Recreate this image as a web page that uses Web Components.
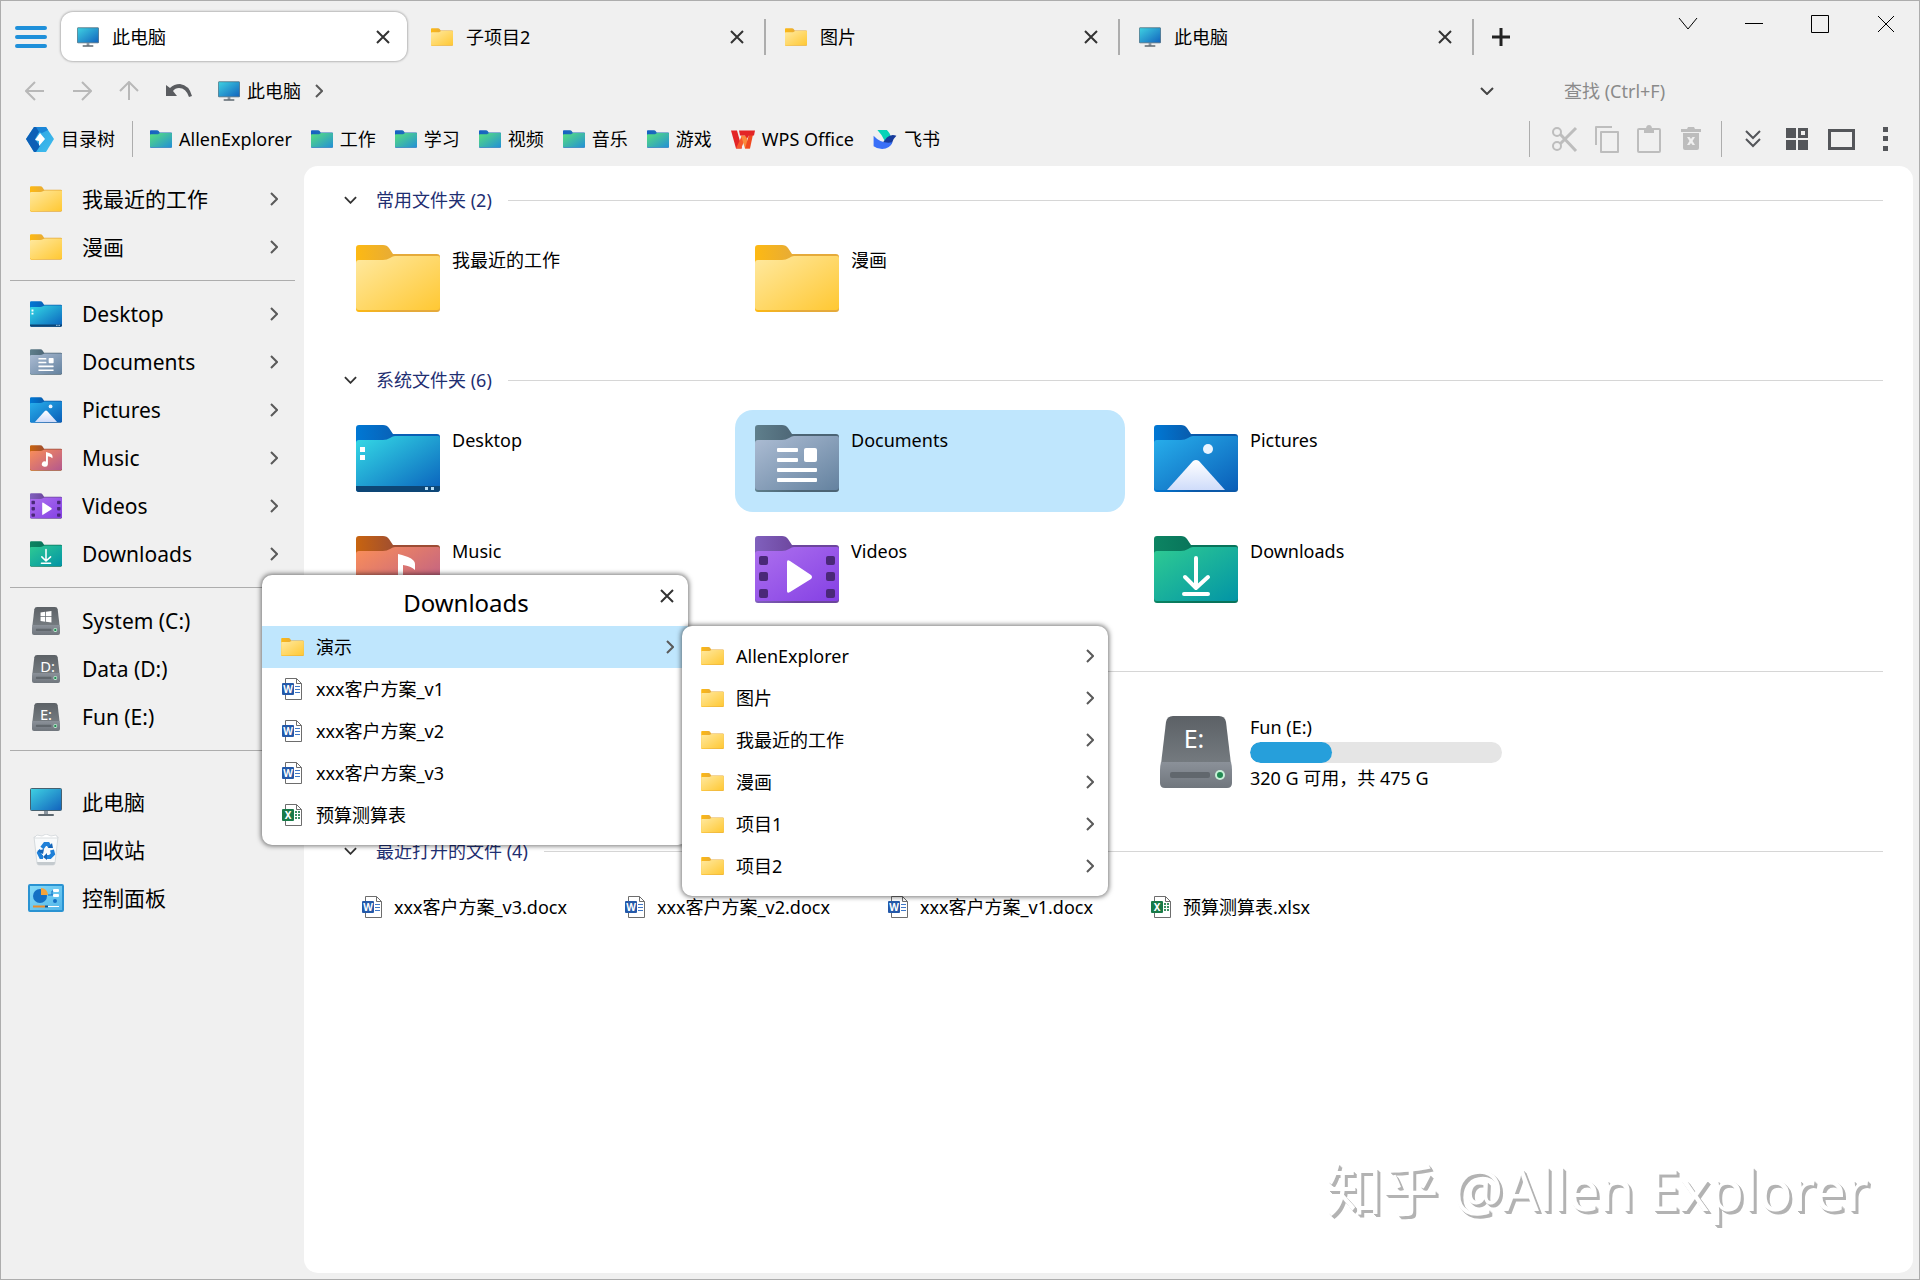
<!DOCTYPE html>
<html lang="zh-CN">
<head>
<meta charset="utf-8">
<title>Allen Explorer</title>
<style>
    html, body {
        margin: 0;
        padding: 0;
    }

    body {
        font-family: "Noto Sans", "Noto Sans CJK SC", sans-serif;
        font-size: 18px;
        line-height: 24px;
        color: #000;
        background: #f0f0f0;
    }
</style>
</head>
<body>
<explorer-window></explorer-window>

<script>
    // ---------- icons ----------
    // every folder shares one silhouette, only the colours and the emblem change
    function folder(tab1, tab2, front1, front2, emblem = '') {
        return `<svg viewBox="0 0 84 67">
            <defs>
                <linearGradient id="b" x1="0" y1="0" x2="1" y2="0"><stop offset="0" stop-color="${tab1}"/><stop offset=".5" stop-color="${tab2}"/></linearGradient>
                <linearGradient id="f" x1="0" y1="0" x2="1" y2="1"><stop offset="0" stop-color="${front1}"/><stop offset="1" stop-color="${front2}"/></linearGradient>
            </defs>
            <path fill="url(#b)" d="M3 0H27Q31 0 33 3L37 9H81Q84 9 84 12V64Q84 67 81 67H3Q0 67 0 64V3Q0 0 3 0Z"/>
            <path fill="url(#f)" d="M3 15H27Q31 15 34 13T39 11H82Q84 11 84 13V62Q84 65 81 65H3Q0 65 0 62V18Q0 15 3 15Z"/>
            ${emblem}
        </svg>`;
    }

    function drive(mark) {
        return `<svg viewBox="0 0 72 72">
            <defs>
                <linearGradient id="t" x1="0" y1="0" x2="0" y2="1"><stop offset="0" stop-color="#5c6166"/><stop offset="1" stop-color="#757b80"/></linearGradient>
                <linearGradient id="u" x1="0" y1="0" x2="0" y2="1"><stop offset="0" stop-color="#8b9199"/><stop offset="1" stop-color="#70767d"/></linearGradient>
            </defs>
            <path fill="url(#t)" d="M13 0H59Q65 0 66 6L71 48H1L6 6Q7 0 13 0Z"/>
            <path fill="url(#u)" d="M1 46H71Q72 50 72 54V67Q72 72 67 72H5Q0 72 0 67V54Q0 50 1 46Z"/>
            <rect x="10" y="56" width="40" height="6" rx="2" fill="#61676d"/>
            <circle cx="60" cy="59" r="5" fill="#c8f0d8"/><circle cx="60" cy="59" r="3" fill="#218a52"/>
            ${mark}
        </svg>`;
    }

    function driveLetter(text, size, x, y) {
        return `<text x="${x}" y="${y}" text-anchor="middle" font-size="${size}" fill="#fff">${text}</text>`;
    }

    function office(color, letter, lines) {
        return `<svg viewBox="0 0 20 22">
            <path fill="#fff" stroke="#6d6d6d" d="M3.500 .5H14.500L19.500 5.500V21.500H3.500Z"/>
            <path fill="none" stroke="#6d6d6d" d="M14.500 .5V5.500H19.500"/>
            ${lines}
            <rect x="0" y="5" width="12" height="12" rx="1" fill="${color}"/>
            <text x="6" y="14.500" text-anchor="middle" font-size="10" font-weight="700" fill="#fff">${letter}</text>
        </svg>`;
    }

    function line(box, d, width = 2, extra = '') {
        return `<svg viewBox="${box}"><path fill="none" stroke="currentColor" stroke-width="${width}" ${extra} d="${d}"/></svg>`;
    }

    const ICONS = {
        folder: folder('#fdb913', '#e5aa3a', '#ffe9a0', '#ffc833'),
        bookmark: folder('#1660c4', '#1d6fb8', '#58e07c', '#2390d6'),
        desktop: folder('#0078d4', '#0a5fb4', '#35dbe6', '#0a62bd',
            `<path fill="#0d4676" d="M0 61H84V64Q84 67 81 67H3Q0 67 0 64Z"/>
             <path fill="#fff" d="M4 22h5v5H4zM4 30h5v5H4z"/><path fill="#b5dcf5" d="M69 62h3v3h-3zM75 62h3v3h-3z"/>`),
        documents: folder('#5f7f8c', '#4c6474', '#adbdd4', '#64829f',
            `<g fill="#fff"><rect x="22" y="23" width="21" height="4" rx="1"/><rect x="22" y="33" width="21" height="4" rx="1"/>
             <rect x="49" y="23" width="13" height="14" rx="2"/><rect x="22" y="43" width="40" height="4" rx="1"/><rect x="22" y="53" width="40" height="4" rx="1"/></g>`),
        pictures: folder('#0078d4', '#0a58a8', '#28b0ec', '#0a5eb8',
            `<defs><linearGradient id="p" x1="0" y1="0" x2="0" y2="1"><stop offset="0" stop-color="#fff"/><stop offset="1" stop-color="#cfdcfa"/></linearGradient></defs>
             <path fill="url(#p)" d="M13 65L39 36Q42 34 45 36L71 65Z"/><circle cx="54" cy="24" r="5" fill="#eaf4ff"/>`),
        music: folder('#c8640f', '#9c4c34', '#fb8f58', '#b4588e',
            `<path fill="#fff" d="M42 18L46 19L52 21Q59 24 59 28V34Q55 30 47 29V50A8 7 0 1 1 42 43Z"/>`),
        videos: folder('#8060bd', '#6c459c', '#ad70ee', '#8440e4',
            `<path fill="#fff" d="M32 26Q32 23 35 25L56 39Q58 41 56 43L35 56Q32 58 32 55Z"/>
             <g fill="#4a2878"><rect x="4" y="20" width="9" height="9" rx="2"/><rect x="4" y="36" width="9" height="9" rx="2"/><rect x="4" y="53" width="9" height="9" rx="2"/>
             <rect x="71" y="20" width="9" height="9" rx="2"/><rect x="71" y="36" width="9" height="9" rx="2"/><rect x="71" y="53" width="9" height="9" rx="2"/></g>`),
        downloads: folder('#0c8462', '#08735a', '#2fcb92', '#0294a6',
            `<path fill="none" stroke="#fff" stroke-width="4" stroke-linecap="round" stroke-linejoin="round" d="M42 22V51M31 41L42 52L54 41M30 58H54"/>`),
        'drive-c': drive('<path fill="#fff" d="M22 14L34 12V24H22ZM36 12L50 10V24H36ZM22 26H34V38L22 36ZM36 26H50V40L36 38Z"/>'),
        'drive-d': drive(driveLetter('D:', 38, 40, 43)),
        'drive-e': drive(driveLetter('E:', 38, 36, 43)),
        'drive-e-large': drive(driveLetter('E:', 25, 34, 32)),
        word: office('#2459a9', 'W', '<path stroke="#3f78c8" d="M13 8.500H18M13 11.500H18M13 14.500H18"/>'),
        excel: office('#187a48', 'X', '<path stroke="#3c8f62" stroke-width="2" stroke-dasharray="2 1" d="M13 8H18M13 11H18M13 14H18"/>'),
        monitor: `<svg viewBox="0 0 32 28">
            <defs><linearGradient id="m" x1="0" y1="0" x2="1" y2="1"><stop offset="0" stop-color="#3fd2e2"/><stop offset="1" stop-color="#1262bd"/></linearGradient></defs>
            <path fill="#8c969f" d="M14 23h4v4h-4z"/><rect x="8" y="26" width="16" height="2" rx="1" fill="#5d6870"/>
            <rect x=".5" y=".5" width="31" height="22" rx="1" fill="url(#m)" stroke="#46606f"/></svg>`,
        recycle: `<svg viewBox="0 0 28 32">
            <path fill="#f8fafb" stroke="#d5dadd" d="M2 3L5 29Q5 31 7 31H21Q23 31 23 29L26 3Z"/>
            <path fill="#c4cace" d="M5 28H23Q23 31 21 31H7Q5 31 5 28Z"/>
            <path fill="#fff" stroke="#d9dde0" d="M2 4L5 1L10 2L14 0L19 2L24 1L26 4Z"/>
            <g fill="none" stroke="#1f80d8" stroke-width="4"><path d="M10 14L13 10H16L18 13"/><path d="M20 16L21 20L18 23H15"/><path d="M11 23H9L7 19L9 16"/></g>
            <path fill="#1565b8" d="M16 14L21 14L20 9ZM15 19V26L11 23ZM5 17L12 15L11 20Z"/></svg>`,
        control: `<svg viewBox="0 0 36 28">
            <defs><linearGradient id="c" x1="0" y1="0" x2="1" y2="1"><stop offset="0" stop-color="#86dcf9"/><stop offset="1" stop-color="#51b4e8"/></linearGradient></defs>
            <rect x="1" y="1" width="34" height="26" rx="1" fill="url(#c)" stroke="#2a93d2" stroke-width="2"/>
            <circle cx="12" cy="12" r="7" fill="#1470c4"/><path fill="#f5a33a" d="M13 11V4A7 7 0 0 1 20 11Z"/>
            <g fill="none" stroke="#1470c4"><path d="M20 11H24V7H26M24 11H26"/></g>
            <g fill="#fff"><rect x="25" y="5" width="6" height="3" rx="1"/><rect x="25" y="10" width="6" height="3" rx="1"/></g><circle cx="27" cy="17" r="2" fill="#1470c4"/>
            <path stroke="#e98b2a" stroke-width="2" d="M5 22.500H17"/><path stroke="#fff" d="M20 22.500H31"/><path stroke="#14548a" stroke-width="2" d="M17 22.500H20"/></svg>`,
        tree: `<svg viewBox="0 0 28 25">
            <defs><linearGradient id="r" x1="0" y1="0" x2="1" y2="1"><stop offset="0" stop-color="#2a9fe0"/><stop offset="1" stop-color="#3fbdee"/></linearGradient></defs>
            <path fill="url(#r)" d="M8 0H20L28 12L20 25H8L0 12Z"/>
            <path fill="#0d5fb6" d="M8 0L16 0L9 12L14 19L10 25H8L0 12Z"/>
            <path fill="#1a86d8" d="M10 0H20L22 3L16 6L13 5Z"/>
            <path fill="#fff" d="M14 6L19 12L13 19L13 14L9 13Z"/></svg>`,
        wps: `<svg viewBox="0 0 24 18"><path fill="#e32526" d="M0 0H6L11 18H5Z"/><path fill="#f7582d" d="M11 5L14 9L10 18H5Z"/>
            <path fill="#fa8a3b" d="M10 5H16V9L19 18H14Z"/><path fill="#f0481f" d="M18 4H22L19 18H14Z"/><path fill="#e32526" d="M8 0H24L23 5H18L16 8L14 5H9Z"/></svg>`,
        feishu: `<svg viewBox="0 0 24 20"><path fill="#05d3b8" d="M4 0H14Q18 4 18 8L12 12Q9 5 4 0Z"/>
            <path fill="#173b9c" d="M9 14L14 8Q18 4 24 6Q21 9 20 12Q18 18 12 18Z"/><path fill="#3a70f8" d="M0 6Q8 15 20 13Q17 20 9 20Q4 20 0 17Z"/></svg>`,
        menu: line('0 0 32 24', 'M2 3H30M2 12H30M2 21H30', 4, 'stroke-linecap="round"'),
        close: line('0 0 14 14', 'M1 1L13 13M13 1L1 13'),
        plus: line('0 0 20 20', 'M10 1V19M1 10H19', 3),
        back: line('0 0 20 20', 'M19 10H2M10 1L1 10L10 19'),
        forward: line('0 0 20 20', 'M1 10H18M10 1L19 10L10 19'),
        up: line('0 0 20 20', 'M10 19V2M1 10L10 1L19 10'),
        undo: `<svg viewBox="0 0 26 14"><path fill="currentColor" d="M0 1L4 4Q8 0 14 0Q23 1 26 12L23 13Q20 4 13 4Q9 4 7 7L11 12H0Z"/></svg>`,
        right: line('0 0 8 14', 'M1 1L7 7L1 13'),
        down: line('0 0 14 8', 'M1 1L7 7L13 1'),
        'win-down': line('0 0 20 20', 'M1 4L10 15L19 4', 1),
        'win-min': line('0 0 20 20', 'M1 9.500H19', 1),
        'win-max': line('0 0 20 20', 'M1.500 1.500H18.500V18.500H1.500Z', 1),
        'win-close': line('0 0 20 20', 'M2 2L18 18M18 2L2 18', 1),
        cut: `<svg viewBox="0 0 26 26"><g fill="none" stroke="currentColor" stroke-width="2"><circle cx="5" cy="6" r="4"/><circle cx="5" cy="20" r="4"/></g>
            <path stroke="currentColor" stroke-width="3" d="M8 8L24 25M8 18L24 2"/></svg>`,
        copy: line('0 0 26 28', 'M2 20V2H18M7 7H24V27H7Z', 2, 'stroke-linejoin="round"'),
        paste: `<svg viewBox="0 0 26 28"><rect x="2" y="4" width="22" height="23" rx="1" fill="none" stroke="currentColor" stroke-width="2"/>
            <path fill="currentColor" fill-rule="evenodd" d="M8 4H10Q10 0 13 0Q16 0 16 4H18V8H8ZM12 3V5H14V3Z"/></svg>`,
        trash: `<svg viewBox="0 0 20 24"><path fill="currentColor" d="M0 2H6L7 0H13L14 2H20V5H0Z"/><path fill="currentColor" fill-rule="evenodd" d="M2 6H18V21Q18 23 16 23H4Q2 23 2 21ZM6 10L8.500 14L6 18H8.500L10 16L11.500 18H14L11.500 14L14 10H11.500L10 12L8.500 10Z"/></svg>`,
        more: line('0 0 16 18', 'M1 1L8 8L15 1M1 9L8 16L15 9'),
        grid: `<svg viewBox="0 0 22 22"><path fill="currentColor" fill-rule="evenodd" d="M0 0H10V10H0ZM12 0H22V10H12ZM15 3V7H19V3ZM0 12H10V22H0ZM12 12H22V22H12Z"/></svg>`,
        pane: line('0 0 27 21', 'M1.500 1.500H25.500V19.500H1.500Z', 3),
        dots: `<svg viewBox="0 0 5 24"><path fill="currentColor" d="M0 0H5V5H0ZM0 9H5V14H0ZM0 19H5V24H0Z"/></svg>`
    };

    // button and link reset shared by the elements below
    const RESET = `
        button, a {
            font: inherit;
            color: inherit;
            background: none;
            border: 0;
            padding: 0;
            margin: 0;
            text-align: left;
            text-decoration: none;
            cursor: pointer;
            white-space: nowrap;
        }
    `;

    class ExplorerElement extends HTMLElement {
        connectedCallback() {
            if (!this.shadowRoot) {
                this.attachShadow({ mode: 'open' });
                this.shadowRoot.innerHTML = this.render();
            }
        }

        attr(name, fallback = '') {
            return this.getAttribute(name) || fallback;
        }
    }

    class ExplorerIcon extends ExplorerElement {
        render() {
            return `
                <style>
                    :host { display: block; flex: none; width: 20px; height: 20px; }
                    svg { display: block; width: 100%; height: 100%; }
                </style>
                ${ICONS[this.attr('name')]}
            `;
        }
    }
    customElements.define('explorer-icon', ExplorerIcon);

    class ExplorerTab extends ExplorerElement {
        render() {
            return `
                <style>
                    ${RESET}
                    :host {
                        display: flex;
                        align-items: center;
                        flex: 0 1 354px;
                        min-width: 0;
                    }
                    .tab {
                        display: flex;
                        align-items: center;
                        flex: 1;
                        min-width: 0;
                        height: 49px;
                        padding: 0 17px 0 16px;
                        box-sizing: border-box;
                        border-radius: 12px;
                    }
                    :host([active]) .tab {
                        background: #fff;
                        box-shadow: 0 0 2px 1px #b8b8b8;
                    }
                    .label { display: flex; align-items: center; gap: 13px; flex: 1; min-width: 0; }
                    .label explorer-icon { width: 22px; height: 18px; }
                    .label explorer-icon[name="monitor"] { height: 20px; }
                    .close explorer-icon { width: 14px; height: 14px; color: #333; }
                    .line { width: 2px; height: 36px; margin: 0 3px; background: #adadad; }
                    :host([active]) .line { background: none; }
                </style>
                <div class="tab">
                    <button class="label"><explorer-icon name="${this.attr('icon')}"></explorer-icon><slot></slot></button>
                    <button class="close" aria-label="关闭"><explorer-icon name="close"></explorer-icon></button>
                </div>
                <div class="line"></div>
            `;
        }
    }
    customElements.define('explorer-tab', ExplorerTab);

    class ExplorerBookmark extends ExplorerElement {
        render() {
            return `
                <style>
                    ${RESET}
                    :host { display: block; }
                    a { display: flex; align-items: center; gap: 7px; }
                    explorer-icon { width: 22px; height: 18px; }
                    :host([logo]) explorer-icon { width: 24px; height: 19px; }
                    :host([tree]) explorer-icon { width: 28px; height: 25px; }
                </style>
                <a href="#"><explorer-icon name="${this.attr('icon', 'bookmark')}"></explorer-icon><slot></slot></a>
            `;
        }
    }
    customElements.define('explorer-bookmark', ExplorerBookmark);

    class ExplorerSideItem extends ExplorerElement {
        render() {
            return `
                <style>
                    ${RESET}
                    :host { display: block; font-size: 21px; }
                    a { display: flex; align-items: center; height: 48px; padding: 0 26px 0 27px; }
                    .icon { display: flex; justify-content: center; width: 36px; margin-right: 18px; }
                    .icon explorer-icon { width: 32px; height: 28px; }
                    .icon explorer-icon[name^="drive"] { width: 28px; }
                    .icon explorer-icon[name="recycle"] { height: 32px; }
                    .icon explorer-icon[name="control"] { width: 36px; }
                    .text { flex: 1; }
                    .arrow { width: 8px; height: 14px; color: #5a5a5a; }
                    :host([leaf]) .arrow { display: none; }
                </style>
                <a href="#">
                    <span class="icon"><explorer-icon name="${this.attr('icon')}"></explorer-icon></span>
                    <span class="text"><slot></slot></span>
                    <explorer-icon class="arrow" name="right"></explorer-icon>
                </a>
            `;
        }
    }
    customElements.define('explorer-side-item', ExplorerSideItem);

    class ExplorerSection extends ExplorerElement {
        render() {
            return `
                <style>
                    ${RESET}
                    :host { display: block; margin-bottom: 24px; }
                    header { display: flex; align-items: center; height: 48px; margin-bottom: 6px; padding-left: 8px; }
                    button { display: flex; align-items: center; gap: 19px; color: #1f2f72; }
                    explorer-icon { width: 13px; height: 8px; color: #333; }
                    .line { flex: 1; height: 1px; margin-left: 16px; background: #d6d6d6; }
                    .items { display: grid; grid-template-columns: repeat(auto-fill, 390px); gap: 9px; }
                    :host([compact]) .items { grid-template-columns: repeat(auto-fill, 263px); gap: 0; }
                </style>
                <header>
                    <button aria-expanded="true" aria-label="${this.attr('label', '驱动器')}"><explorer-icon name="down"></explorer-icon><span>${this.attr('label')}</span></button>
                    <div class="line"></div>
                </header>
                <div class="items"><slot></slot></div>
            `;
        }
    }
    customElements.define('explorer-section', ExplorerSection);

    class ExplorerTile extends ExplorerElement {
        render() {
            return `
                <style>
                    ${RESET}
                    :host { display: block; }
                    a {
                        display: flex;
                        gap: 12px;
                        height: 102px;
                        padding: 15px 20px 0;
                        box-sizing: border-box;
                        border-radius: 18px;
                    }
                    :host([selected]) a { background: #bfe6fd; }
                    explorer-icon { width: 84px; height: 67px; }
                    .text { padding-top: 3px; }
                </style>
                <a href="#"><explorer-icon name="${this.attr('icon')}"></explorer-icon><span class="text"><slot></slot></span></a>
            `;
        }
    }
    customElements.define('explorer-tile', ExplorerTile);

    class ExplorerDrive extends ExplorerElement {
        render() {
            return `
                <style>
                    ${RESET}
                    :host { display: block; }
                    a {
                        display: flex;
                        gap: 18px;
                        height: 102px;
                        padding: 14px 26px 0;
                        box-sizing: border-box;
                    }
                    explorer-icon { width: 72px; height: 72px; margin-top: 1px; }
                    .info { display: flex; flex-direction: column; gap: 3px; }
                    progress {
                        display: block;
                        width: 252px;
                        height: 21px;
                        appearance: none;
                        border: 0;
                        border-radius: 11px;
                        overflow: hidden;
                    }
                    progress::-webkit-progress-bar { background: #e5e5e5; }
                    progress::-webkit-progress-value { background: #269fdb; border-radius: 11px; }
                </style>
                <a href="#">
                    <explorer-icon name="${this.attr('icon')}"></explorer-icon>
                    <span class="info">
                        <span><slot></slot></span>
                        <progress max="${this.attr('total')}" value="${this.attr('used')}" aria-label="已用空间"></progress>
                        <span>${this.attr('total') - this.attr('used')} G 可用，共 ${this.attr('total')} G</span>
                    </span>
                </a>
            `;
        }
    }
    customElements.define('explorer-drive', ExplorerDrive);

    class ExplorerFile extends ExplorerElement {
        render() {
            return `
                <style>
                    ${RESET}
                    :host { display: block; }
                    a { display: flex; align-items: center; gap: 12px; height: 52px; padding-left: 26px; }
                    explorer-icon { width: 20px; height: 22px; }
                </style>
                <a href="#"><explorer-icon name="${this.attr('icon')}"></explorer-icon><slot></slot></a>
            `;
        }
    }
    customElements.define('explorer-file', ExplorerFile);

    class ExplorerMenu extends ExplorerElement {
        render() {
            var label = this.attr('label');

            return `
                <style>
                    ${RESET}
                    :host {
                        display: block;
                        width: 426px;
                        padding: 9px 0;
                        box-sizing: border-box;
                        border-radius: 10px;
                        overflow: hidden;
                        background: #fff;
                        box-shadow: 0 0 5px 1px rgba(0, 0, 0, .55);
                    }
                    :host([label]) { padding-top: 0; }
                    header { display: flex; height: 51px; padding: 0 3px 0 21px; }
                    h2 {
                        flex: 1;
                        margin: 0;
                        padding-top: 4px;
                        font-size: 24px;
                        line-height: 48px;
                        font-weight: 400;
                        text-align: center;
                    }
                    button { display: flex; align-items: center; justify-content: center; width: 36px; height: 42px; }
                    header explorer-icon { width: 14px; height: 14px; color: #333; }
                </style>
                ${label ? `<header><h2>${label}</h2><button aria-label="关闭"><explorer-icon name="close"></explorer-icon></button></header>` : ''}
                <slot></slot>
            `;
        }
    }
    customElements.define('explorer-menu', ExplorerMenu);

    class ExplorerMenuItem extends ExplorerElement {
        render() {
            return `
                <style>
                    ${RESET}
                    :host { display: block; }
                    :host([selected]) { background: #bfe6fd; }
                    a { display: flex; align-items: center; height: 42px; padding: 0 14px 0 18px; }
                    .icon { display: flex; justify-content: center; width: 24px; margin-right: 12px; }
                    .icon explorer-icon { width: 22px; height: 22px; }
                    .icon explorer-icon[name="folder"] { width: 23px; height: 18px; }
                    .text { flex: 1; }
                    .arrow { width: 8px; height: 14px; color: #5a5a5a; }
                    :host([leaf]) .arrow { display: none; }
                </style>
                <a href="#">
                    <span class="icon"><explorer-icon name="${this.attr('icon', 'folder')}"></explorer-icon></span>
                    <span class="text"><slot></slot></span>
                    <explorer-icon class="arrow" name="right"></explorer-icon>
                </a>
            `;
        }
    }
    customElements.define('explorer-menu-item', ExplorerMenuItem);

    class ExplorerWindow extends ExplorerElement {
        render() {
            return `
                <style>
                    ${RESET}
                    :host {
                        display: flex;
                        flex-direction: column;
                        position: relative;
                        min-height: 100vh;
                        box-sizing: border-box;
                        border: 1px solid #adadad;
                        background: #f0f0f0;
                    }
                    button { display: flex; align-items: center; justify-content: center; }

                    .tabs { display: flex; align-items: center; height: 71px; padding-left: 14px; box-sizing: border-box; }
                    .hamburger { margin-right: 14px; color: #1f90da; }
                    .hamburger explorer-icon { width: 32px; height: 24px; }
                    .plus { margin-left: 14px; color: #222; }
                    .controls { display: flex; align-self: flex-start; margin-left: auto; }
                    .controls button { width: 66px; height: 46px; }

                    .nav { display: flex; align-items: center; height: 38px; padding-left: 24px; }
                    .nav .step { width: 20px; margin-right: 27px; color: #b8b8b8; }
                    .nav .undo { width: 26px; margin-right: 26px; color: #5a5c60; }
                    .nav .undo explorer-icon { width: 26px; height: 14px; }
                    .path { gap: 7px; }
                    .path .pc { width: 22px; height: 20px; }
                    .path .arrow { width: 8px; height: 14px; margin-left: 7px; color: #5a5a5a; }
                    .drop { margin-left: auto; color: #444; }
                    .drop explorer-icon { width: 14px; height: 8px; }
                    .nav input {
                        width: 355px;
                        margin-left: 70px;
                        padding: 0;
                        border: 0;
                        outline: 0;
                        font: inherit;
                        background: none;
                    }
                    .nav input::placeholder { color: #8a8a8a; }

                    .bar { display: flex; align-items: center; height: 54px; padding: 2px 0 0 25px; }
                    .sep { width: 1px; height: 36px; background: #adadad; }
                    .bookmarks { display: flex; align-items: center; gap: 19px; }
                    .bookmarks .sep { margin: 0 -2px; }
                    .tools { display: flex; align-items: center; margin-left: auto; padding-right: 31px; color: #54565a; }
                    .tools .off { width: 42px; color: #bdbdbd; }
                    .tools .sep { margin: 0 9px; }
                    .tools .sep:first-child { margin-right: 14px; }
                    .tools .on { width: 44px; }
                    .tools .off explorer-icon { width: 26px; height: 28px; }
                    .tools .off explorer-icon[name="trash"] { width: 20px; height: 24px; }
                    .tools .on explorer-icon { width: 22px; height: 22px; }
                    .tools .on explorer-icon[name="more"] { width: 16px; height: 18px; }
                    .tools .on explorer-icon[name="pane"] { width: 27px; height: 21px; }
                    .tools .dots { width: 5px; height: 24px; margin-left: 20px; }

                    .body { display: flex; flex: 1; padding: 0 6px 6px 0; }
                    aside { flex: none; width: 303px; padding-top: 9px; box-sizing: border-box; }
                    hr { height: 1px; margin: 9px 9px 9px; border: 0; background: #adadad; }
                    hr.last { margin-bottom: 27px; }
                    main {
                        flex: 1;
                        min-width: 0;
                        padding: 10px 30px 60px 32px;
                        border-radius: 14px;
                        background: #fff;
                        box-sizing: border-box;
                    }
                    explorer-drive { grid-column: 3; }

                    /* flyout menus over the panels */
                    .flyout { position: absolute; left: 261px; top: 574px; }
                    .flyout.sub { left: 681px; top: 625px; }

                    .watermark {
                        position: absolute;
                        right: 50px;
                        bottom: 52px;
                        font-size: 56px;
                        line-height: 76px;
                        color: #fff;
                        text-shadow: 1px 1px #b3b3b3, 2px 2px #b3b3b3, 3px 3px #b3b3b3;
                        white-space: nowrap;
                    }
                </style>

                <div class="tabs">
                    <button class="hamburger" aria-label="菜单"><explorer-icon name="menu"></explorer-icon></button>
                    <explorer-tab icon="monitor" active>此电脑</explorer-tab>
                    <explorer-tab icon="folder">子项目2</explorer-tab>
                    <explorer-tab icon="folder">图片</explorer-tab>
                    <explorer-tab icon="monitor">此电脑</explorer-tab>
                    <button class="plus" aria-label="新标签页"><explorer-icon name="plus"></explorer-icon></button>
                    <div class="controls">
                        <button aria-label="折叠"><explorer-icon name="win-down"></explorer-icon></button>
                        <button aria-label="最小化"><explorer-icon name="win-min"></explorer-icon></button>
                        <button aria-label="最大化"><explorer-icon name="win-max"></explorer-icon></button>
                        <button aria-label="关闭窗口"><explorer-icon name="win-close"></explorer-icon></button>
                    </div>
                </div>

                <nav class="nav">
                    <button class="step" aria-label="后退"><explorer-icon name="back"></explorer-icon></button>
                    <button class="step" aria-label="前进"><explorer-icon name="forward"></explorer-icon></button>
                    <button class="step" aria-label="向上"><explorer-icon name="up"></explorer-icon></button>
                    <button class="undo" aria-label="撤销"><explorer-icon name="undo"></explorer-icon></button>
                    <button class="path">
                        <explorer-icon class="pc" name="monitor"></explorer-icon>此电脑
                        <explorer-icon class="arrow" name="right"></explorer-icon>
                    </button>
                    <button class="drop" aria-label="历史"><explorer-icon name="down"></explorer-icon></button>
                    <input type="search" aria-label="查找" placeholder="查找 (Ctrl+F)">
                </nav>

                <div class="bar">
                    <div class="bookmarks">
                        <explorer-bookmark icon="tree" tree>目录树</explorer-bookmark>
                        <div class="sep"></div>
                        <explorer-bookmark>AllenExplorer</explorer-bookmark>
                        <explorer-bookmark>工作</explorer-bookmark>
                        <explorer-bookmark>学习</explorer-bookmark>
                        <explorer-bookmark>视频</explorer-bookmark>
                        <explorer-bookmark>音乐</explorer-bookmark>
                        <explorer-bookmark>游戏</explorer-bookmark>
                        <explorer-bookmark icon="wps" logo>WPS Office</explorer-bookmark>
                        <explorer-bookmark icon="feishu" logo>飞书</explorer-bookmark>
                    </div>
                    <div class="tools">
                        <div class="sep"></div>
                        <button class="off" aria-label="剪切"><explorer-icon name="cut"></explorer-icon></button>
                        <button class="off" aria-label="复制"><explorer-icon name="copy"></explorer-icon></button>
                        <button class="off" aria-label="粘贴"><explorer-icon name="paste"></explorer-icon></button>
                        <button class="off" aria-label="删除"><explorer-icon name="trash"></explorer-icon></button>
                        <div class="sep"></div>
                        <button class="on" aria-label="更多"><explorer-icon name="more"></explorer-icon></button>
                        <button class="on" aria-label="视图"><explorer-icon name="grid"></explorer-icon></button>
                        <button class="on" aria-label="窗格"><explorer-icon name="pane"></explorer-icon></button>
                        <button aria-label="选项"><explorer-icon class="dots" name="dots"></explorer-icon></button>
                    </div>
                </div>

                <div class="body">
                    <aside>
                        <explorer-side-item icon="folder">我最近的工作</explorer-side-item>
                        <explorer-side-item icon="folder">漫画</explorer-side-item>
                        <hr>
                        <explorer-side-item icon="desktop">Desktop</explorer-side-item>
                        <explorer-side-item icon="documents">Documents</explorer-side-item>
                        <explorer-side-item icon="pictures">Pictures</explorer-side-item>
                        <explorer-side-item icon="music">Music</explorer-side-item>
                        <explorer-side-item icon="videos">Videos</explorer-side-item>
                        <explorer-side-item icon="downloads">Downloads</explorer-side-item>
                        <hr>
                        <explorer-side-item icon="drive-c" leaf>System (C:)</explorer-side-item>
                        <explorer-side-item icon="drive-d" leaf>Data (D:)</explorer-side-item>
                        <explorer-side-item icon="drive-e" leaf>Fun (E:)</explorer-side-item>
                        <hr class="last">
                        <explorer-side-item icon="monitor" leaf>此电脑</explorer-side-item>
                        <explorer-side-item icon="recycle" leaf>回收站</explorer-side-item>
                        <explorer-side-item icon="control" leaf>控制面板</explorer-side-item>
                    </aside>
                    <main>
                        <explorer-section label="常用文件夹 (2)">
                            <explorer-tile icon="folder">我最近的工作</explorer-tile>
                            <explorer-tile icon="folder">漫画</explorer-tile>
                        </explorer-section>
                        <explorer-section label="系统文件夹 (6)">
                            <explorer-tile icon="desktop">Desktop</explorer-tile>
                            <explorer-tile icon="documents" selected>Documents</explorer-tile>
                            <explorer-tile icon="pictures">Pictures</explorer-tile>
                            <explorer-tile icon="music">Music</explorer-tile>
                            <explorer-tile icon="videos">Videos</explorer-tile>
                            <explorer-tile icon="downloads">Downloads</explorer-tile>
                        </explorer-section>
                        <explorer-section>
                            <explorer-drive icon="drive-e-large" used="155" total="475">Fun (E:)</explorer-drive>
                        </explorer-section>
                        <explorer-section label="最近打开的文件 (4)" compact>
                            <explorer-file icon="word">xxx客户方案_v3.docx</explorer-file>
                            <explorer-file icon="word">xxx客户方案_v2.docx</explorer-file>
                            <explorer-file icon="word">xxx客户方案_v1.docx</explorer-file>
                            <explorer-file icon="excel">预算测算表.xlsx</explorer-file>
                        </explorer-section>
                    </main>
                </div>

                <explorer-menu class="flyout" label="Downloads">
                    <explorer-menu-item selected>演示</explorer-menu-item>
                    <explorer-menu-item icon="word" leaf>xxx客户方案_v1</explorer-menu-item>
                    <explorer-menu-item icon="word" leaf>xxx客户方案_v2</explorer-menu-item>
                    <explorer-menu-item icon="word" leaf>xxx客户方案_v3</explorer-menu-item>
                    <explorer-menu-item icon="excel" leaf>预算测算表</explorer-menu-item>
                </explorer-menu>
                <explorer-menu class="flyout sub">
                    <explorer-menu-item>AllenExplorer</explorer-menu-item>
                    <explorer-menu-item>图片</explorer-menu-item>
                    <explorer-menu-item>我最近的工作</explorer-menu-item>
                    <explorer-menu-item>漫画</explorer-menu-item>
                    <explorer-menu-item>项目1</explorer-menu-item>
                    <explorer-menu-item>项目2</explorer-menu-item>
                </explorer-menu>

                <div class="watermark">知乎 @Allen Explorer</div>
            `;
        }
    }
    customElements.define('explorer-window', ExplorerWindow);
</script>
</body>
</html>
